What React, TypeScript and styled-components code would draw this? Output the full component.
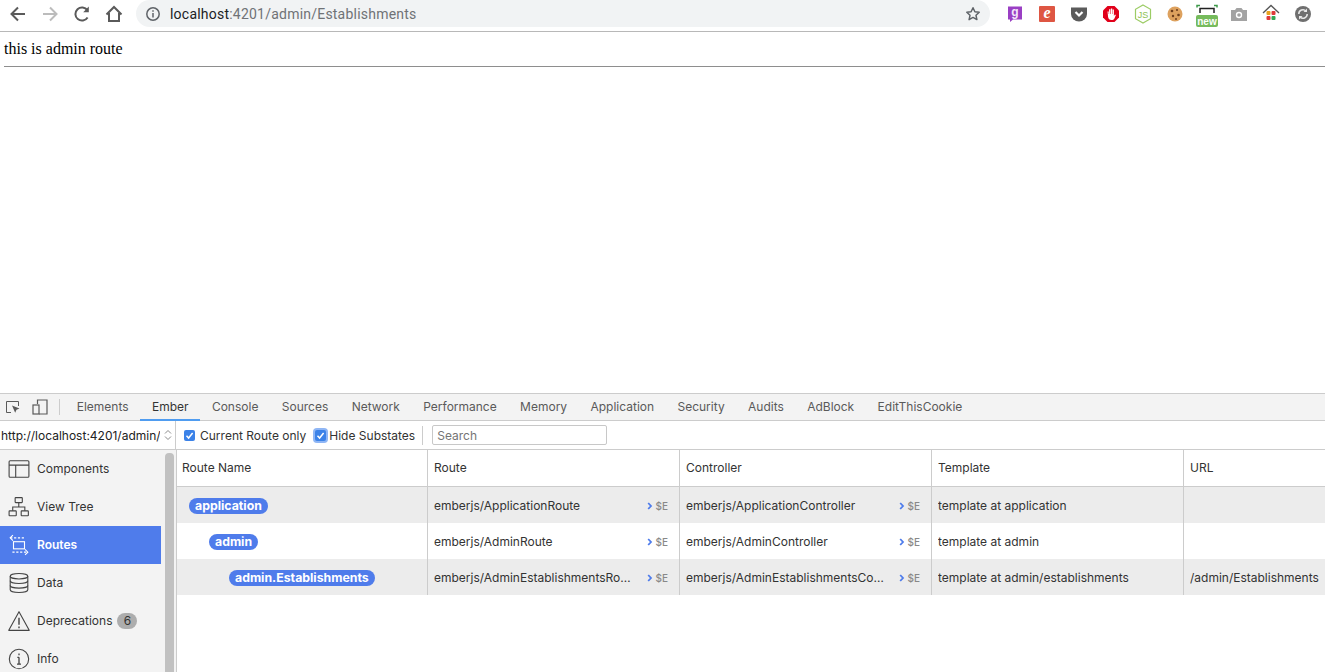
import React from "react";
import styled, { createGlobalStyle } from "styled-components";

const GlobalStyle = createGlobalStyle`
  html, body {
    margin: 0;
    padding: 0;
    height: 100%;
    overflow: hidden;
    background: #fff;
  }
`;

const uiFont = `Inter, "Noto Sans", "Liberation Sans", sans-serif`;

const tabs = ["Elements", "Ember", "Console", "Sources", "Network", "Performance", "Memory", "Application", "Security", "Audits", "AdBlock", "EditThisCookie"];

const routes = [
  { name: "application", depth: 0, route: "emberjs/ApplicationRoute", controller: "emberjs/ApplicationController", template: "template at application", url: "" },
  { name: "admin", depth: 1, route: "emberjs/AdminRoute", controller: "emberjs/AdminController", template: "template at admin", url: "" },
  { name: "admin.Establishments", depth: 2, route: "emberjs/AdminEstablishmentsRoute", controller: "emberjs/AdminEstablishmentsController", template: "template at admin/establishments", url: "/admin/Establishments" },
];

const Stroke = ({ size = 20, color = "#444", width = 1, children }: { size?: number; color?: string; width?: number; children: React.ReactNode }) => (
  <svg width={size} height={size} viewBox="0 0 20 20" fill="none" stroke={color} strokeWidth={width}>
    {children}
  </svg>
);

const navIcons = {
  back: (
    <Stroke color="#5a5a5a" width={2}>
      <path d="M17 10H4M10 3.5L3.5 10l6.5 6.5" />
    </Stroke>
  ),
  forward: (
    <Stroke color="#bcbcbc" width={2}>
      <path d="M3 10h13M10 3.5l6.5 6.5-6.5 6.5" />
    </Stroke>
  ),
  reload: (
    <Stroke color="#5a5a5a" width={2}>
      <path d="M15.6 13.5A6.6 6.6 0 1 1 15.4 6.2" />
      <path d="M16.8 2.6v5.6h-5.6z" fill="#5a5a5a" stroke="none" />
    </Stroke>
  ),
  home: (
    <Stroke color="#5a5a5a" width={2}>
      <path d="M2.5 10.5L10 3l7.5 7.5M5 9v8h10V9" />
    </Stroke>
  ),
};

const extensions = [
  <svg key="g" width="18" height="18" viewBox="0 0 18 18">
    <path d="M2 1.500h14v13H7l-3 2.500v-2.500H2z" fill="#9a3fc4" />
    <text x="9" y="10.500" fontSize="12" fontWeight="700" textAnchor="middle" fill="#f4e8fa" fontFamily="Liberation Sans">g</text>
  </svg>,
  <svg key="e" width="18" height="18" viewBox="0 0 18 18">
    <rect x="1" y="1" width="16" height="16" rx="1" fill="#de5643" />
    <text x="9" y="13" fontSize="16" fontStyle="italic" fontWeight="700" textAnchor="middle" fill="#fff" fontFamily="Liberation Serif">e</text>
  </svg>,
  <svg key="p" width="18" height="18" viewBox="0 0 18 18">
    <path d="M1 2.500h16v6.500a8 7.500 0 0 1-16 0z" fill="#5b5b5b" />
    <path d="M5.500 7L9 10.500 12.500 7" fill="none" stroke="#fff" strokeWidth="2.200" />
  </svg>,
  <svg key="a" width="18" height="18" viewBox="0 0 18 18">
    <path d="M5.500 1h7L17 5.500v7L12.500 17h-7L1 12.500v-7z" fill="#e1001a" />
    <path d="M5.500 6.500h1.200V9h.4V4.200h1.300V9h.5V3.500h1.300V9h.4V4.500h1.300V11l1-1.500 1 .5-1.500 3.500c-.6 1-1.500 1.500-3 1.500-2 0-3-1-3.300-3z" fill="#fff" />
  </svg>,
  <svg key="n" width="18" height="20" viewBox="0 0 18 20">
    <path d="M9 1l7.500 4.300v9.400L9 19l-7.500-4.300V5.300z" fill="none" stroke="#9ccc65" strokeWidth="1.200" />
    <text x="9" y="13.500" fontSize="9" textAnchor="middle" fill="#8cc152" fontFamily="Liberation Sans">JS</text>
  </svg>,
  <svg key="c" width="18" height="18" viewBox="0 0 18 18">
    <circle cx="9" cy="9" r="7.500" fill="#dda15e" />
    <circle cx="6" cy="6" r="1.300" fill="#6b3d1c" />
    <circle cx="11" cy="5" r="1" fill="#6b3d1c" />
    <circle cx="12.500" cy="10" r="1.300" fill="#6b3d1c" />
    <circle cx="7" cy="11" r="1.200" fill="#6b3d1c" />
    <circle cx="10" cy="14" r="1" fill="#6b3d1c" />
  </svg>,
  <svg key="f" width="24" height="27" viewBox="0 0 24 27">
    <path d="M2 7.500V5.500h3M22 7.500V5.500h-3" stroke="#3d9a4a" strokeWidth="1.500" fill="none" />
    <path d="M5 13V8.500h14V13" stroke="#222" strokeWidth="1.500" fill="none" />
    <rect x="1" y="15" width="22" height="12" rx="2" fill="#76bb5c" />
    <text x="12" y="24.500" fontSize="10" fontWeight="700" textAnchor="middle" fill="#fff" fontFamily="Liberation Sans">new</text>
  </svg>,
  <svg key="k" width="18" height="18" viewBox="0 0 18 18">
    <path d="M1 5h4l1.500-2h5L13 5h4v11H1z" fill="#a3a3a3" />
    <circle cx="9" cy="10" r="3.200" fill="#fff" />
    <circle cx="9" cy="10" r="1.800" fill="#a3a3a3" />
  </svg>,
  <svg key="h" width="18" height="20" viewBox="0 0 18 20">
    <path d="M1 9l8-7.500L17 9" fill="none" stroke="#555" strokeWidth="1.300" />
    <rect x="4.500" y="7" width="4" height="4" rx="1" fill="#e8a21d" />
    <rect x="9.500" y="7" width="4" height="4" rx="1" fill="#e03a3a" />
    <rect x="4.500" y="12" width="4" height="4" rx="1" fill="#e03a3a" />
    <rect x="9.500" y="12" width="4" height="4" rx="1" fill="#34a853" />
  </svg>,
  <svg key="r" width="18" height="18" viewBox="0 0 18 18">
    <circle cx="9" cy="9" r="8" fill="#6f6f6f" />
    <path d="M4.800 9a4.200 4.200 0 0 1 7.200-3M13.200 9a4.200 4.200 0 0 1-7.200 3" fill="none" stroke="#e8e8e8" strokeWidth="1.500" />
    <path d="M13 3.500V7H9.500zM5 14.500V11h3.500z" fill="#e8e8e8" />
  </svg>,
];

const sideIcons = {
  components: (
    <Stroke size={22}>
      <rect x="1" y="2.500" width="18" height="15" rx="1" />
      <path d="M1 6.500h18M7 6.500v11" />
    </Stroke>
  ),
  tree: (
    <Stroke size={22}>
      <rect x="6.500" y="1.500" width="6.500" height="4.500" rx="0.500" />
      <rect x="1" y="13.500" width="6.500" height="4.500" rx="0.500" />
      <rect x="12" y="13.500" width="6.500" height="4.500" rx="0.500" />
      <path d="M9.800 6v4M4.300 13.500V10h11v3.500" />
    </Stroke>
  ),
  routes: (
    <Stroke size={22} color="#fff">
      <path d="M2 3.500h14" strokeDasharray="2 1.500" />
      <path d="M4.500 1L2 3.500 4.500 6" />
      <rect x="5" y="7" width="10" height="6.500" />
      <path d="M4 16.500h14" strokeDasharray="2 1.500" />
      <path d="M15.500 14l2.500 2.500-2.500 2.500" />
    </Stroke>
  ),
  data: (
    <Stroke size={22}>
      <ellipse cx="10" cy="3.800" rx="8" ry="2.500" />
      <path d="M2 3.800v12.400c0 1.400 3.600 2.500 8 2.500s8-1.100 8-2.500V3.800" />
      <path d="M2 8c0 1.400 3.600 2.500 8 2.500s8-1.100 8-2.500M2 12.200c0 1.400 3.600 2.500 8 2.500s8-1.100 8-2.500" />
    </Stroke>
  ),
  warning: (
    <Stroke size={22}>
      <path d="M10 1.500L19.300 18.500H.7z" strokeLinejoin="round" />
      <path d="M10 7v6.500M10 15v1.500" strokeWidth="1.300" />
    </Stroke>
  ),
  info: (
    <Stroke size={22}>
      <circle cx="10" cy="10" r="8.800" />
      <path d="M10 8.500v6M8.200 14.600h3.600M8.500 8.500H10M10 5v1.500" strokeWidth="1.200" />
    </Stroke>
  ),
};

const sideItems = [
  { label: "Components", icon: sideIcons.components },
  { label: "View Tree", icon: sideIcons.tree },
  { label: "Routes", icon: sideIcons.routes, active: true },
  { label: "Data", icon: sideIcons.data },
  { label: "Deprecations", icon: sideIcons.warning, badge: "6" },
  { label: "Info", icon: sideIcons.info },
];

function Checkbox({ focused }: { focused?: boolean }) {
  return (
    <CheckBoxBox $focused={focused}>
      <svg width="11" height="11" viewBox="0 0 11 11" fill="none" stroke="#fff" strokeWidth="1.500">
        <path d="M2.500 5.800L4.600 8l4-5" />
      </svg>
    </CheckBoxBox>
  );
}

function ObjectCell({ text }: { text: string }) {
  return (
    <Cell>
      <CellText>{text}</CellText>
      <Inspect>
        <svg width="6" height="8" viewBox="0 0 6 8" fill="none" stroke="#4f7ceb" strokeWidth="1.800">
          <path d="M1.200 1l2.800 3-2.800 3" />
        </svg>
        <span>$E</span>
      </Inspect>
    </Cell>
  );
}

export default function App() {
  return (
    <Page>
      <GlobalStyle />
      <BrowserBar>
        <NavGroup>
          <NavButton>{navIcons.back}</NavButton>
          <NavButton>{navIcons.forward}</NavButton>
          <NavButton>{navIcons.reload}</NavButton>
          <NavButton>{navIcons.home}</NavButton>
        </NavGroup>
        <Omnibox>
          <svg width="16" height="16" viewBox="0 0 16 16" fill="none" stroke="#5f6368" strokeWidth="1.500">
            <circle cx="8" cy="8" r="6.200" />
            <path d="M8 7v4.500M8 4.300v1.500" />
          </svg>
          <UrlText>
            localhost<UrlRest>:4201/admin/Establishments</UrlRest>
          </UrlText>
          <StarSlot>
            <svg width="16" height="16" viewBox="0 0 16 16" fill="none" stroke="#5f6368" strokeWidth="1.500">
              <path d="M8 1.800l1.900 4 4.300.5-3.200 3 .9 4.300L8 11.400l-3.900 2.200.9-4.300-3.200-3 4.300-.5z" strokeLinejoin="round" />
            </svg>
          </StarSlot>
        </Omnibox>
        <Extensions>
          {extensions.map((icon) => (
            <ExtensionSlot key={icon.key}>{icon}</ExtensionSlot>
          ))}
        </Extensions>
      </BrowserBar>

      <Viewport>
        <Heading>this is admin route</Heading>
        <Rule />
      </Viewport>

      <DevTools>
        <TabBar>
          <TabTool>
            <svg width="16" height="16" viewBox="0 0 16 16" fill="none" stroke="#5a5a5a" strokeWidth="1">
              <path d="M6 13.500H1.500v-11h12V7" />
              <path d="M7 6.500l7.500 3-3 1.300-1.300 3z" fill="#5a5a5a" stroke="none" />
            </svg>
          </TabTool>
          <TabTool>
            <svg width="16" height="16" viewBox="0 0 16 16" fill="none" stroke="#5a5a5a" strokeWidth="1.200">
              <path d="M5.500 5V1h9.500v14H7" />
              <rect x="1" y="6" width="6" height="9" />
            </svg>
          </TabTool>
          <TabDivider />
          {tabs.map((tab) => (
            <Tab key={tab} $active={tab === "Ember"}>
              {tab}
            </Tab>
          ))}
        </TabBar>

        <FilterBar>
          <UrlSelect>
            <SelectValue>http://localhost:4201/admin/Establishments</SelectValue>
            <svg width="8" height="12" viewBox="0 0 8 12" fill="none" stroke="#8a8a8a" strokeWidth="1">
              <path d="M1 4.500L4 1.500l3 3M1 7.500l3 3 3-3" />
            </svg>
          </UrlSelect>
          <Filters>
            <CheckLabel>
              <Checkbox />
              Current Route only
            </CheckLabel>
            <CheckLabel $tight>
              <Checkbox focused />
              Hide Substates
            </CheckLabel>
            <FilterDivider />
            <SearchInput>Search</SearchInput>
          </Filters>
        </FilterBar>

        <Panels>
          <Sidebar>
            <SideList>
              {sideItems.map((item) => (
                <SideItem key={item.label} $active={item.active}>
                  <SideIcon>{item.icon}</SideIcon>
                  {item.label}
                  {item.badge && <Badge>{item.badge}</Badge>}
                </SideItem>
              ))}
            </SideList>
            <ScrollTrack>
              <ScrollThumb />
            </ScrollTrack>
          </Sidebar>

          <RouteTable>
            <HeaderRow>
              {["Route Name", "Route", "Controller", "Template", "URL"].map((h) => (
                <Cell key={h}>
                  <CellText>{h}</CellText>
                </Cell>
              ))}
            </HeaderRow>
            {routes.map((r, i) => (
              <BodyRow key={r.name} $striped={i % 2 === 0}>
                <Cell>
                  <Pill $depth={r.depth}>{r.name}</Pill>
                </Cell>
                <ObjectCell text={r.route} />
                <ObjectCell text={r.controller} />
                <Cell>
                  <CellText>{r.template}</CellText>
                </Cell>
                <Cell>
                  <CellText>{r.url}</CellText>
                </Cell>
              </BodyRow>
            ))}
          </RouteTable>
        </Panels>
      </DevTools>
    </Page>
  );
}

const Page = styled.div`
  display: flex;
  flex-direction: column;
  width: 1325px;
  height: 672px;
  overflow: hidden;
`;

const BrowserBar = styled.header`
  display: flex;
  flex: none;
  height: 31px;
  padding-left: 2px;
  border-bottom: 1px solid #b8b8b8;
  background: #fff;
`;

const NavGroup = styled.div`
  display: flex;
  height: 27px;
`;

const NavButton = styled.div`
  display: flex;
  align-items: center;
  justify-content: center;
  width: 32px;
`;

const Omnibox = styled.div`
  display: flex;
  flex: 1;
  align-items: center;
  height: 27px;
  margin-left: 6px;
  padding-left: 9px;
  border-radius: 14px;
  background: #f1f3f4;
`;

const UrlText = styled.span`
  margin-left: 9px;
  font: 14px "Roboto", "Liberation Sans", sans-serif;
  color: #202124;
  letter-spacing: 0.22px;
`;

const UrlRest = styled.span`
  color: #6f7276;
`;

const StarSlot = styled.div`
  display: flex;
  margin-left: auto;
  margin-right: 9px;
`;

const Extensions = styled.div`
  display: flex;
  margin-left: 9px;
  padding-right: 6px;
`;

const ExtensionSlot = styled.div`
  display: flex;
  align-items: center;
  justify-content: center;
  width: 32px;
  height: 27px;
`;

const Viewport = styled.main`
  flex: 1;
  padding: 8px 0 0 4px;
  font: 16px "Liberation Serif", "Times New Roman", serif;
  color: #000;
`;

const Heading = styled.div`
  height: 18px;
  line-height: 18px;
`;

const Rule = styled.hr`
  margin: 8px 0 0;
  border: none;
  border-top: 1px solid #8e8e8e;
`;

const DevTools = styled.section`
  display: flex;
  flex: none;
  flex-direction: column;
  height: 279px;
  font-family: ${uiFont};
  font-size: 12px;
  color: #333;
`;

const TabBar = styled.nav`
  display: flex;
  flex: none;
  align-items: stretch;
  height: 26px;
  padding-left: 5px;
  border-top: 1px solid #ccc;
  border-bottom: 1px solid #ccc;
  background: #f3f3f3;
`;

const TabTool = styled.div`
  display: flex;
  align-items: center;
  justify-content: center;
  width: 16px;
  margin-right: 11px;
`;

const TabDivider = styled.div`
  align-self: center;
  width: 1px;
  height: 16px;
  margin-right: 5px;
  background: #ccc;
`;

const Tab = styled.div<{ $active?: boolean }>`
  display: flex;
  align-items: center;
  padding: 0 11.7px;
  margin-bottom: -1px;
  color: ${(p) => (p.$active ? "#333" : "#5a5a5a")};
  border-bottom: 2px solid ${(p) => (p.$active ? "#4f9cf0" : "transparent")};
  box-sizing: border-box;
`;

const FilterBar = styled.div`
  display: flex;
  flex: none;
  height: 28px;
  border-bottom: 1px solid #ccc;
`;

const UrlSelect = styled.div`
  display: flex;
  align-items: center;
  width: 176px;
  box-sizing: border-box;
  padding: 0 3px 0 1px;
  border-right: 1px solid #ccc;
  background: #fff;
`;

const SelectValue = styled.span`
  flex: 1;
  min-width: 0;
  margin-right: 4px;
  overflow: hidden;
  white-space: nowrap;
  color: #222;
`;

const Filters = styled.div`
  display: flex;
  align-items: center;
  flex: 1;
  padding-left: 8px;
`;

const CheckLabel = styled.label<{ $tight?: boolean }>`
  display: flex;
  align-items: center;
  gap: ${(p) => (p.$tight ? "3px" : "5px")};
  margin-right: 9px;
  color: #333;
`;

const CheckBoxBox = styled.span<{ $focused?: boolean }>`
  display: flex;
  align-items: center;
  justify-content: center;
  width: 11px;
  height: 11px;
  border-radius: 2px;
  background: #3b82e8;
  ${(p) => p.$focused && "box-shadow: 0 0 0 2px #8fb6f5;"}
`;

const FilterDivider = styled.div`
  width: 1px;
  height: 19px;
  margin: 0 9px 0 -2px;
  background: #ccc;
`;

const SearchInput = styled.div`
  display: flex;
  align-items: center;
  width: 175px;
  height: 20px;
  box-sizing: border-box;
  padding-left: 4px;
  border: 1px solid #c8c8c8;
  border-radius: 2px;
  color: #757575;
`;

const Panels = styled.div`
  display: flex;
  flex: 1;
  min-height: 0;
`;

const Sidebar = styled.aside`
  display: flex;
  flex: none;
  width: 177px;
  box-sizing: border-box;
  border-right: 1px solid #ccc;
  background: #f3f3f3;
`;

const SideList = styled.ul`
  width: 161px;
  margin: 0;
  padding: 0;
  list-style: none;
`;

const SideItem = styled.li<{ $active?: boolean }>`
  display: flex;
  align-items: center;
  height: 38px;
  box-sizing: border-box;
  padding: 0 0 1px 8px;
  font-size: 12px;
  color: ${(p) => (p.$active ? "#fff" : "#333")};
  font-weight: ${(p) => (p.$active ? 600 : 400)};
  background: ${(p) => (p.$active ? "#4f7ceb" : "transparent")};
`;

const SideIcon = styled.span`
  display: flex;
  width: 22px;
  margin-right: 7px;
`;

const Badge = styled.span`
  width: 20px;
  height: 16px;
  margin-left: 5px;
  border-radius: 8px;
  background: #adadad;
  text-align: center;
  line-height: 16px;
  font-size: 12px;
`;

const ScrollTrack = styled.div`
  flex: none;
  width: 15px;
  padding: 3px 2px 0 4px;
  box-sizing: border-box;
`;

const ScrollThumb = styled.div`
  height: 100%;
  border-radius: 4px 4px 0 0;
  background: #c1c1c1;
`;

const RouteTable = styled.div`
  flex: 1;
  min-width: 0;
  overflow: hidden;
`;

const columns = "251px 252px 252px 252px 1fr";

const HeaderRow = styled.div`
  display: grid;
  grid-template-columns: ${columns};
  height: 37px;
  box-sizing: border-box;
  border-bottom: 1px solid #ccc;

  & > div > span {
    margin-top: -2px;
  }
`;

const BodyRow = styled.div<{ $striped: boolean }>`
  display: grid;
  grid-template-columns: ${columns};
  height: 36px;
  background: ${(p) => (p.$striped ? "#ececec" : "#fff")};
`;

const Cell = styled.div`
  display: flex;
  align-items: center;
  min-width: 0;
  padding: 0 6px 0 5px;
  border-right: 1px solid #ccc;

  &:last-child {
    padding-left: 6px;
    border-right: none;
  }

  & + & {
    padding-left: 6px;
  }
`;

const CellText = styled.span`
  flex: 1;
  min-width: 0;
  overflow: hidden;
  white-space: nowrap;
  text-overflow: ellipsis;
  color: #333;
`;

const Inspect = styled.span`
  display: flex;
  flex: none;
  align-items: center;
  gap: 3px;
  margin: 2px 5px 0 13px;
  font-size: 10px;
  font-weight: 500;
  color: #888;
`;

const Pill = styled.span<{ $depth: number }>`
  margin: 2px 0 0 ${(p) => 7 + p.$depth * 20}px;
  height: 16px;
  padding: 0 6px;
  border-radius: 8px;
  background: #4f7ceb;
  color: #fff;
  font-size: 12.3px;
  font-weight: 700;
  line-height: 16px;
  white-space: nowrap;
`;
